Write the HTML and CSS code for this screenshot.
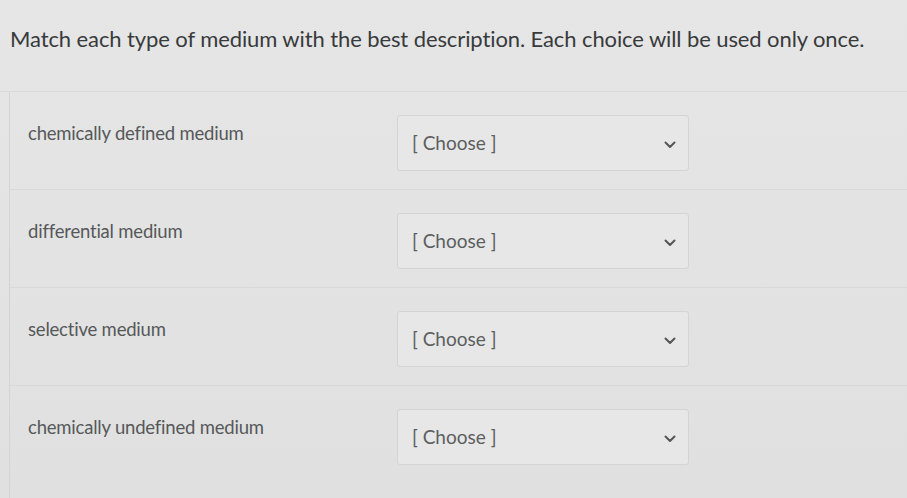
FILE: index.html
```html
<!DOCTYPE html>
<html>
<head>
<meta charset="utf-8">
<link rel="stylesheet" href="styles.css">
</head>
<body>
<div class="page">
  <div class="question">Match each type of medium with the best description. Each choice will be used only once.</div>
  <div class="card">
    <div class="row">
      <div class="label">chemically defined medium</div>
      <div class="select"><span>[ Choose ]</span><svg class="chev" width="12" height="8" viewBox="0 0 12 8"><path d="M1.5 1.5 L6 6 L10.5 1.5" fill="none" stroke="#555" stroke-width="2" stroke-linecap="round" stroke-linejoin="round"/></svg></div>
    </div>
    <div class="row">
      <div class="label">differential medium</div>
      <div class="select"><span>[ Choose ]</span><svg class="chev" width="12" height="8" viewBox="0 0 12 8"><path d="M1.5 1.5 L6 6 L10.5 1.5" fill="none" stroke="#555" stroke-width="2" stroke-linecap="round" stroke-linejoin="round"/></svg></div>
    </div>
    <div class="row">
      <div class="label">selective medium</div>
      <div class="select"><span>[ Choose ]</span><svg class="chev" width="12" height="8" viewBox="0 0 12 8"><path d="M1.5 1.5 L6 6 L10.5 1.5" fill="none" stroke="#555" stroke-width="2" stroke-linecap="round" stroke-linejoin="round"/></svg></div>
    </div>
    <div class="row last">
      <div class="label">chemically undefined medium</div>
      <div class="select"><span>[ Choose ]</span><svg class="chev" width="12" height="8" viewBox="0 0 12 8"><path d="M1.5 1.5 L6 6 L10.5 1.5" fill="none" stroke="#555" stroke-width="2" stroke-linecap="round" stroke-linejoin="round"/></svg></div>
    </div>
  </div>
</div>
</body>
</html>
```
FILE: styles.css
```css
html, body {
  margin: 0;
  padding: 0;
  background: #e1e2e1;
}
body {
  font-family: Lato, "Open Sans", sans-serif;
  color: #3a3b3c;
}
.page {
  width: 907px;
  height: 498px;
  overflow: hidden;
  background: linear-gradient(to bottom, #e5e6e5, #dfe0df);
}
.question {
  padding: 23px 0 0 10px;
  height: 68px;
  font-size: 22px;
  line-height: 32px;
  color: #383a3c;
  letter-spacing: -0.1px;
  border-bottom: 1px solid #d9dad9;
}
.card {
  margin-left: 9px;
  border-left: 1px solid #d3d4d3;
  height: 420px;
}
.row {
  display: flex;
  height: 97px;
  border-bottom: 1px solid #d7d8d7;
}
.row.last {
  border-bottom: none;
}
.label {
  width: 387px;
  padding: 29px 0 0 18px;
  box-sizing: border-box;
  font-size: 18.5px;
  line-height: 24px;
  color: #56585a;
  letter-spacing: -0.2px;
}
.select {
  margin-top: 23px;
  width: 292px;
  height: 56px;
  box-sizing: border-box;
  border: 1px solid #d3d4d3;
  border-radius: 3px;
  background: #e6e7e6;
  display: flex;
  align-items: center;
  justify-content: space-between;
  padding: 0 12px 0 14px;
  font-size: 19px;
  color: #5c5e60;
}
.select span {
  margin-top: -2px;
}
.chev {
  display: block;
  margin-top: 4px;
}
```
